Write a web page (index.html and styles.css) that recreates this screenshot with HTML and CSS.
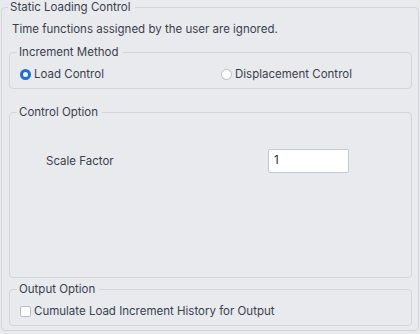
FILE: index.html
```html
<!DOCTYPE html>
<html lang="en">
<head>
    <meta charset="UTF-8">
    <title>Static Loading Control</title>
    <link rel="stylesheet" href="styles.css">
</head>
<body>
    <fieldset class="group outer">
        <legend>Static Loading Control</legend>
        <p class="note">Time functions assigned by the user are ignored.</p>

        <!-- Increment Method -->
        <fieldset class="group method">
            <legend>Increment Method</legend>
            <div class="option-row">
                <label class="option">
                    <span class="radio checked"></span>
                    Load Control
                </label>
                <label class="option">
                    <span class="radio"></span>
                    Displacement Control
                </label>
            </div>
        </fieldset>

        <!-- Control Option -->
        <fieldset class="group control">
            <legend>Control Option</legend>
            <div class="field-row">
                <span class="field-label">Scale Factor</span>
                <div class="text-box">1</div>
            </div>
        </fieldset>

        <!-- Output Option -->
        <fieldset class="group output">
            <legend>Output Option</legend>
            <label class="option">
                <span class="check"></span>
                Cumulate Load Increment History for Output
            </label>
        </fieldset>
    </fieldset>
</body>
</html>
```

FILE: styles.css
```css
body {
    margin: 0;
    padding: 0;
    background-color: #e9eaee;
    font-family: Inter, "Noto Sans", sans-serif;
    font-size: 11.5px;
    line-height: 15px;
    color: #3a3f4c;
}

.group {
    border: 1px solid #d2d4d9;
    border-radius: 4px;
    margin: 0;
    min-width: 0;
}

.group legend {
    padding: 0 4px 0 2px;
    line-height: 15px;
}

.outer {
    margin: 0 1px 0 1px;
    padding: 0 6px 5px 7px;
    height: 331px;
    box-sizing: border-box;
}

.outer > legend {
    margin-left: -1px;
}

.note {
    margin: 7px 0 8px 3px;
}

.method,
.control,
.output {
    padding: 0 10px 0 10px;
}

.method legend,
.control legend,
.output legend {
    margin-left: -3px;
}

.method {
    padding-bottom: 6px;
}

.option-row {
    display: flex;
    margin-top: 7px;
}

.option-row .option:first-child {
    width: 201px;
}

.option {
    display: flex;
    align-items: center;
    gap: 3px;
}

.radio {
    width: 11px;
    height: 11px;
    box-sizing: border-box;
    border-radius: 50%;
    border: 1px solid #b9bcc4;
    background-color: #ffffff;
}

.radio.checked {
    border: 3px solid #1b6fe4;
}

.check {
    width: 11px;
    height: 11px;
    box-sizing: border-box;
    border: 1px solid #b9bcc4;
    border-radius: 2px;
    background-color: #ffffff;
}

.control {
    margin-top: 16px;
    height: 173px;
    box-sizing: border-box;
}

.field-row {
    display: flex;
    align-items: center;
    margin-top: 29px;
}

.field-label {
    margin-left: 26px;
    width: 222px;
}

.text-box {
    width: 81px;
    height: 24px;
    box-sizing: border-box;
    padding: 3px 5px;
    background-color: #ffffff;
    border: 1px solid #c6c9cf;
    border-radius: 2px;
    color: #1d2740;
}

.output {
    margin-top: 4px;
    padding-bottom: 6px;
}

.output .option {
    margin-top: 7px;
}
```
